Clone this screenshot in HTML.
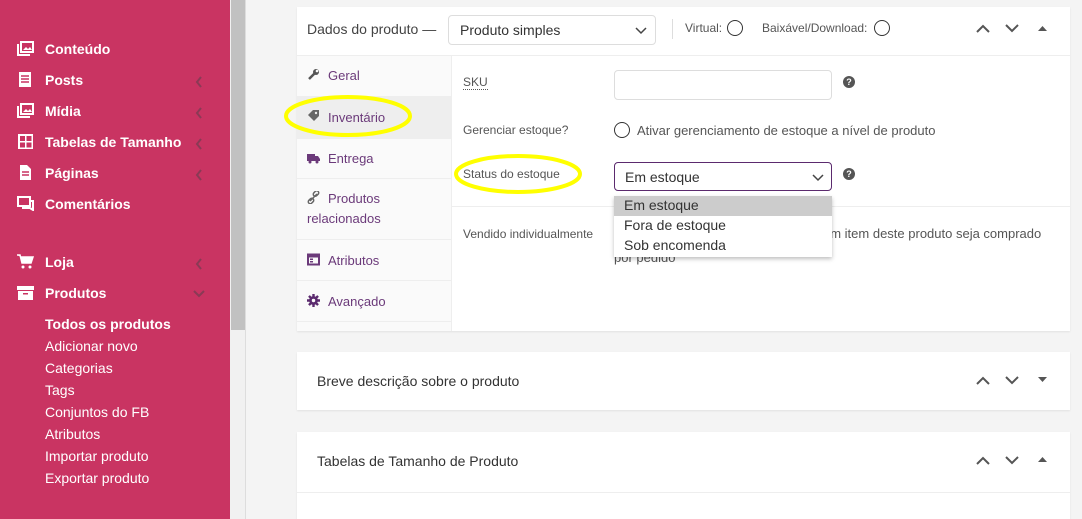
<!DOCTYPE html><html><head><meta charset="utf-8"><style>
*{box-sizing:border-box;margin:0;padding:0}
body{width:1082px;height:519px;overflow:hidden;background:#f4f4f4;font-family:"Liberation Sans",sans-serif;position:relative;color:#444}
.a{position:absolute}
#sb{left:0;top:0;width:230px;height:519px;background:#c93462;color:#fff}
.mi{position:absolute;left:45px;font-weight:bold;font-size:14px}
.ic{position:absolute;left:17px;width:17px;height:15px}
.ch{position:absolute;left:195px;width:8px;height:12px}
.sub{position:absolute;left:45px;font-size:14px}
.panel{position:absolute;left:297px;width:773px;background:#fff;box-shadow:0 1px 2px rgba(0,0,0,.08)}
.t{position:absolute;font-size:13px}
.tab{position:absolute;left:0;width:155px;border-bottom:1px solid #eee;color:#6b3a7a;font-size:13px}
.ti{position:absolute;left:10px;width:13px;height:13px}
</style></head><body>
<div id="sb" class="a">
<svg class="ic" style="top:41px" viewBox="0 0 17 15"><rect x="4" y="1" width="12" height="10" fill="none" stroke="#fff" stroke-width="2"/><path d="M1 3v11h12" fill="none" stroke="#fff" stroke-width="2"/><path d="M6 9l3-3 2 2 2-2 2 3z" fill="#fff"/></svg>
<div class="mi" style="top:41px">Conteúdo</div>
<svg class="ic" style="top:72px" viewBox="0 0 17 15"><rect x="2" y="0" width="12" height="15" fill="#fff"/><path d="M4 4h8M4 7h8M4 10h8" stroke="#c93462" stroke-width="1.5"/></svg>
<div class="mi" style="top:72px">Posts</div><svg class="ch" style="top:76px"><path d="M6 1L2 6l4 5" fill="none" stroke="#8a3a55" stroke-width="2"/></svg>
<svg class="ic" style="top:103px" viewBox="0 0 17 15"><rect x="4" y="1" width="12" height="10" fill="none" stroke="#fff" stroke-width="2"/><path d="M1 3v11h12" fill="none" stroke="#fff" stroke-width="2"/><path d="M6 9l3-3 2 2 2-2 2 3z" fill="#fff"/></svg>
<div class="mi" style="top:103px">Mídia</div><svg class="ch" style="top:107px"><path d="M6 1L2 6l4 5" fill="none" stroke="#8a3a55" stroke-width="2"/></svg>
<svg class="ic" style="top:134px" viewBox="0 0 17 15"><rect x="1" y="0" width="15" height="15" fill="#fff"/><path d="M3 2h5v5H3zM9.5 2h5v5h-5zM3 8.5h5v5H3zM9.5 8.5h5v5h-5z" fill="#c93462"/></svg>
<div class="mi" style="top:134px">Tabelas de Tamanho</div><svg class="ch" style="top:138px"><path d="M6 1L2 6l4 5" fill="none" stroke="#8a3a55" stroke-width="2"/></svg>
<svg class="ic" style="top:165px" viewBox="0 0 17 15"><path d="M3 0h7l4 4v11H3z" fill="#fff"/><path d="M5 7h7M5 10h7" stroke="#c93462" stroke-width="1.5"/></svg>
<div class="mi" style="top:165px">Páginas</div><svg class="ch" style="top:169px"><path d="M6 1L2 6l4 5" fill="none" stroke="#8a3a55" stroke-width="2"/></svg>
<svg class="ic" style="top:196px" viewBox="0 0 17 15"><path d="M1 1h12v9H1z" fill="none" stroke="#fff" stroke-width="2"/><path d="M13 5h3v9l-3-2H6v-2" fill="none" stroke="#fff" stroke-width="2"/></svg>
<div class="mi" style="top:196px">Comentários</div>
<svg class="ic" style="top:254px" viewBox="0 0 17 15"><path d="M0 1h3l2 8h9l2-6H4" fill="#fff" stroke="#fff" stroke-width="1.5"/><circle cx="6" cy="13" r="1.5" fill="#fff"/><circle cx="13" cy="13" r="1.5" fill="#fff"/></svg>
<div class="mi" style="top:254px">Loja</div><svg class="ch" style="top:258px"><path d="M6 1L2 6l4 5" fill="none" stroke="#8a3a55" stroke-width="2"/></svg>
<svg class="ic" style="top:285px" viewBox="0 0 17 15"><rect x="0" y="1" width="17" height="4" fill="#fff"/><rect x="1" y="6" width="15" height="9" fill="#fff"/><rect x="6" y="8" width="5" height="1.5" fill="#c93462"/></svg>
<div class="mi" style="top:285px">Produtos</div><svg class="a" style="left:193px;top:290px" width="12" height="8"><path d="M1 1l5 5 5-5" fill="none" stroke="#8a3a55" stroke-width="2"/></svg>
<div class="sub" style="top:316px;font-weight:bold">Todos os produtos</div>
<div class="sub" style="top:338px">Adicionar novo</div>
<div class="sub" style="top:360px">Categorias</div>
<div class="sub" style="top:382px">Tags</div>
<div class="sub" style="top:404px">Conjuntos do FB</div>
<div class="sub" style="top:426px">Atributos</div>
<div class="sub" style="top:448px">Importar produto</div>
<div class="sub" style="top:470px">Exportar produto</div>
</div>
<div class="a" style="left:230px;top:0;width:16px;height:519px;background:#f1f1f1;border-right:1px solid #ddd"></div>
<div class="a" style="left:231px;top:0;width:14px;height:330px;background:#c1c1c1"></div>

<div class="panel" style="top:7px;height:324px">
<div class="t" style="left:10px;top:14px;font-size:14px">Dados do produto —</div>
<div class="a" style="left:151px;top:8px;width:208px;height:30px;border:1px solid #ddd;border-radius:4px"><span class="t" style="left:11px;top:6px;font-size:14px;color:#333">Produto simples</span><svg class="a" style="left:186px;top:11px" width="12" height="8"><path d="M1 1l5 5 5-5" fill="none" stroke="#444" stroke-width="1.5"/></svg></div>
<div class="a" style="left:375px;top:12px;width:1px;height:20px;background:#ddd"></div>
<div class="t" style="left:388px;top:14px;font-size:12px;color:#555">Virtual:</div>
<div class="a" style="left:430px;top:13px;width:16px;height:16px;border:1.5px solid #333;border-radius:50%"></div>
<div class="t" style="left:465px;top:14px;font-size:12px;color:#555">Baixável/Download:</div>
<div class="a" style="left:577px;top:13px;width:16px;height:16px;border:1.5px solid #333;border-radius:50%"></div>
<svg class="a" style="left:679px;top:17px" width="14" height="9"><path d="M1 8l6-6 6 6" fill="none" stroke="#555" stroke-width="2"/></svg>
<svg class="a" style="left:708px;top:17px" width="14" height="9"><path d="M1 1l6 6 6-6" fill="none" stroke="#555" stroke-width="2"/></svg>
<svg class="a" style="left:741px;top:18px" width="9" height="6"><path d="M0 6l4.5-5 4.5 5z" fill="#555"/></svg>
<div class="a" style="left:0;top:48px;width:773px;height:1px;background:#eee"></div>
<div class="a" style="left:0;top:49px;width:155px;height:275px;background:#fafafa;border-right:1px solid #eee"></div>
<div class="tab" style="top:49px;height:41px"><svg class="ti" style="top:12px" viewBox="0 0 13 13"><path d="M2 11l6-6" stroke="#555" stroke-width="2.5"/><circle cx="9" cy="4" r="3" fill="#555"/><circle cx="10" cy="3" r="1.3" fill="#fafafa"/></svg><span class="a" style="left:31px;top:12px">Geral</span></div>
<div class="tab" style="top:90px;height:42px;background:#eee"><svg class="ti" style="top:12px" viewBox="0 0 13 13"><path d="M1 6l5-5h6v6l-5 5z" fill="#666"/><circle cx="9" cy="4" r="1.2" fill="#eee"/></svg><span class="a" style="left:31px;top:13px">Inventário</span></div>
<div class="tab" style="top:132px;height:40px"><svg class="ti" style="top:13px" viewBox="0 0 13 11"><rect x="0" y="1" width="8" height="7" fill="#6b3a7a"/><path d="M8 3h3l2 3v2H8z" fill="#6b3a7a"/><circle cx="3" cy="9" r="1.5" fill="#6b3a7a"/><circle cx="10" cy="9" r="1.5" fill="#6b3a7a"/></svg><span class="a" style="left:31px;top:12px">Entrega</span></div>
<div class="tab" style="top:172px;height:61px"><svg class="ti" style="top:12px" viewBox="0 0 13 13"><path d="M3 10l7-7" stroke="#666" stroke-width="1.5"/><rect x="6" y="0.5" width="6" height="4" rx="2" transform="rotate(-45 9 2.5)" fill="none" stroke="#666" stroke-width="1.5"/><rect x="1" y="8" width="6" height="4" rx="2" transform="rotate(-45 4 10)" fill="none" stroke="#666" stroke-width="1.5"/></svg><span class="a" style="left:31px;top:12px">Produtos</span><span class="a" style="left:10px;top:32px">relacionados</span></div>
<div class="tab" style="top:233px;height:41px"><svg class="ti" style="top:13px" viewBox="0 0 13 12"><rect x="0" y="0" width="13" height="12" fill="#6b3a7a"/><rect x="2" y="4" width="9" height="6" fill="#fafafa"/><rect x="3" y="5" width="3" height="1.5" fill="#6b3a7a"/><rect x="3" y="7.5" width="3" height="1.5" fill="#6b3a7a"/></svg><span class="a" style="left:31px;top:13px">Atributos</span></div>
<div class="tab" style="top:274px;height:41px"><svg class="ti" style="top:13px" viewBox="0 0 12 12"><circle cx="6" cy="6" r="4" fill="#5b2a6e"/><path d="M6 0v12M0 6h12M1.8 1.8l8.4 8.4M10.2 1.8l-8.4 8.4" stroke="#5b2a6e" stroke-width="2.2"/><circle cx="6" cy="6" r="1.6" fill="#fafafa"/></svg><span class="a" style="left:31px;top:13px">Avançado</span></div>
<div class="t" style="left:166px;top:68px;font-size:12px;color:#555;border-bottom:1px dotted #555">SKU</div>
<div class="a" style="left:317px;top:63px;width:218px;height:30px;border:1px solid #ddd;border-radius:4px"></div>
<div class="a" style="left:546px;top:69px;width:12px;height:12px;border-radius:50%;background:#555;color:#fff;font-size:9px;font-weight:bold;text-align:center;line-height:12px">?</div>
<div class="t" style="left:166px;top:116px;font-size:12px;color:#555">Gerenciar estoque?</div>
<div class="a" style="left:317px;top:115px;width:16px;height:16px;border:1.5px solid #333;border-radius:50%"></div>
<div class="t" style="left:340px;top:116px;color:#555">Ativar gerenciamento de estoque a nível de produto</div>
<div class="t" style="left:166px;top:160px;font-size:12px;color:#555">Status do estoque</div>
<div class="a" style="left:317px;top:155px;width:218px;height:29px;border:1px solid #5b2a6e;border-radius:4px"><span class="t" style="left:10px;top:6px;color:#333;font-size:14px">Em estoque</span><svg class="a" style="left:197px;top:11px" width="12" height="8"><path d="M1 1l5 5 5-5" fill="none" stroke="#444" stroke-width="1.5"/></svg></div>
<div class="a" style="left:546px;top:161px;width:12px;height:12px;border-radius:50%;background:#555;color:#fff;font-size:9px;font-weight:bold;text-align:center;line-height:12px">?</div>
<div class="a" style="left:155px;top:199px;width:618px;height:1px;background:#eee"></div>
<div class="t" style="left:166px;top:220px;font-size:12px;color:#555">Vendido individualmente</div>
<div class="t" style="left:526px;top:219px;color:#555">um item deste produto seja comprado</div>
<div class="t" style="left:317px;top:243px;color:#555">por pedido</div>
<div class="a" style="left:317px;top:189px;width:218px;height:61px;background:#fff;box-shadow:0 2px 4px rgba(0,0,0,.25);font-size:14px;color:#333">
<div style="height:20px;background:#ccc;padding:1px 10px">Em estoque</div>
<div style="height:20px;padding:1px 10px">Fora de estoque</div>
<div style="height:20px;padding:1px 10px">Sob encomenda</div></div>
</div>

<div class="panel" style="top:352px;height:58px">
<div class="t" style="left:20px;top:21px;font-size:14px;color:#333">Breve descrição sobre o produto</div>
<svg class="a" style="left:679px;top:24px" width="14" height="9"><path d="M1 8l6-6 6 6" fill="none" stroke="#555" stroke-width="2"/></svg>
<svg class="a" style="left:708px;top:24px" width="14" height="9"><path d="M1 1l6 6 6-6" fill="none" stroke="#555" stroke-width="2"/></svg>
<svg class="a" style="left:741px;top:25px" width="9" height="6"><path d="M0 0l4.5 5 4.5-5z" fill="#555"/></svg>
</div>
<div class="panel" style="top:432px;height:87px">
<div class="t" style="left:20px;top:21px;font-size:14px;color:#333">Tabelas de Tamanho de Produto</div>
<svg class="a" style="left:679px;top:24px" width="14" height="9"><path d="M1 8l6-6 6 6" fill="none" stroke="#555" stroke-width="2"/></svg>
<svg class="a" style="left:708px;top:24px" width="14" height="9"><path d="M1 1l6 6 6-6" fill="none" stroke="#555" stroke-width="2"/></svg>
<svg class="a" style="left:741px;top:24px" width="9" height="6"><path d="M0 6l4.5-5 4.5 5z" fill="#555"/></svg>
<div class="a" style="left:0;top:60px;width:773px;height:1px;background:#eee"></div>
</div>
<svg class="a" style="left:0;top:0" width="1082" height="519"><ellipse cx="348" cy="116" rx="62" ry="19" fill="none" stroke="#ffff00" stroke-width="4"/><ellipse cx="518" cy="174" rx="62" ry="18" fill="none" stroke="#ffff00" stroke-width="4"/></svg>
</body></html>
